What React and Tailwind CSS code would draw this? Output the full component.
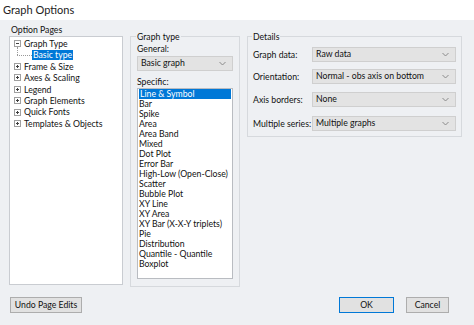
import React from "react";

const font = { fontFamily: 'Lato, "Noto Sans", sans-serif' };

function Chevron() {
  return (
    <svg width="7" height="5" viewBox="0 0 7 5" className="shrink-0">
      <path d="M0.5 1 L3.5 4 L6.5 1" fill="none" stroke="#8a8a8a" strokeWidth="1" />
    </svg>
  );
}

function Select({ value, className = "" }) {
  return (
    <div className={`flex items-center justify-between h-[15px] bg-[#e3e3e3] border border-[#cfcfcf] pl-[3px] pr-[6px] ${className}`}>
      <span className="text-[#111] leading-none whitespace-nowrap">{value}</span>
      <Chevron />
    </div>
  );
}

function Expander({ minus }) {
  return (
    <span className="relative w-[7px] h-[7px] border border-[#a0a0a0] bg-white shrink-0 flex items-center justify-center">
      <span className="absolute w-[3px] h-px bg-[#404040]" />
      {!minus && <span className="absolute w-px h-[3px] bg-[#404040]" />}
    </span>
  );
}

const treeItems = ["Frame & Size", "Axes & Scaling", "Legend", "Graph Elements", "Quick Fonts", "Templates & Objects"];

const listItems = [
  "Line & Symbol", "Bar", "Spike", "Area", "Area Band", "Mixed", "Dot Plot", "Error Bar",
  "High-Low (Open-Close)", "Scatter", "Bubble Plot", "XY Line", "XY Area", "XY Bar (X-X-Y triplets)",
  "Pie", "Distribution", "Quantile - Quantile", "Boxplot",
];

const details = [
  ["Graph data:", "Raw data", "mt-[5px]"],
  ["Orientation:", "Normal - obs axis on bottom", "mt-[7px]"],
  ["Axis borders:", "None", "mt-[8px]"],
  ["Multiple series:", "Multiple graphs", "mt-[9px]"],
];

export default function App() {
  return (
    <div style={font} className="w-[474px] h-[325px] flex flex-col bg-white text-[8.7px] text-[#111] overflow-hidden">
      <div className="h-[20px] flex items-center pl-[3px] text-[11px] text-[#222] bg-white">Graph Options</div>
      <div className="flex-1 bg-[#eef0f3] flex flex-col">
        <div className="flex pl-[9px] pt-[3px]">
          {/* Left column */}
          <div className="w-[114px] flex flex-col">
            <div className="h-[13px] pl-[2px] leading-[13px]">Option Pages</div>
            <div className="h-[249px] bg-white border border-[#c9ccd1] pt-[1px] pl-[4px] flex flex-col leading-[11.4px]">
              <div className="flex items-center gap-[3px] h-[11.4px]">
                <Expander minus />
                <span>Graph Type</span>
              </div>
              <div className="flex items-center h-[11.4px] relative">
                <span className="absolute left-[3px] top-[-2px] h-[8px] border-l border-dotted border-[#999]" />
                <span className="ml-[3px] mt-[-3px] w-[15px] h-[4px] border-b border-dotted border-[#999]" />
                <span className="bg-[#0078d7] text-white px-[1px] h-[10px] leading-[10px] whitespace-nowrap">Basic type</span>
              </div>
              {treeItems.map((t) => (
                <div key={t} className="flex items-center gap-[3px] h-[11.4px] whitespace-nowrap">
                  <Expander />
                  <span>{t}</span>
                </div>
              ))}
            </div>
          </div>
          {/* Middle group */}
          <fieldset className="ml-[7px] w-[110px] h-[256px] mt-[8px] border border-[#d6d9dd] px-[6px] pb-[6px]">
            <legend className="px-[1px] leading-[11px] -ml-[1px]">Graph type</legend>
            <div className="leading-[11px] mt-[1px]">General:</div>
            <Select value="Basic graph" className="mt-[2px] w-[96px]" />
            <div className="leading-[11px] mt-[5px]">Specific:</div>
            <div className="mt-[1px] w-[96px] h-[191px] bg-white border border-[#b9bcc1] flex flex-col">
              {listItems.map((t, i) => (
                <div key={t} className={`h-[10px] leading-[10px] pl-[1px] whitespace-nowrap ${i === 0 ? "bg-[#0078d7] text-white mx-px" : ""}`}>
                  {t}
                </div>
              ))}
            </div>
          </fieldset>
          {/* Details group */}
          <fieldset className="ml-[7px] w-[214px] h-[106px] mt-[8px] border border-[#d6d9dd] pl-[5px] pr-[5px]">
            <legend className="px-[1px] leading-[11px] -ml-[1px]">Details</legend>
            {details.map(([l, v, m]) => (
              <div key={l} className={`flex items-center ${m}`}>
                <span className="w-[59px] shrink-0 whitespace-nowrap">{l}</span>
                <Select value={v} className="w-[144px]" />
              </div>
            ))}
          </fieldset>
        </div>
        <div className="flex items-center mt-auto mb-[12px]">
          <button className="ml-[10px] w-[72px] h-[16px] bg-[#e1e1e1] border border-[#adadad] text-[8.7px] leading-none whitespace-nowrap">Undo Page Edits</button>
          <button className="ml-auto w-[55px] h-[16px] bg-[#e1e1e1] border border-[#0078d7] text-[8.7px] leading-none">OK</button>
          <button className="ml-[12px] mr-[25px] w-[43px] h-[16px] bg-[#e1e1e1] border border-[#adadad] text-[8.7px] leading-none">Cancel</button>
        </div>
      </div>
    </div>
  );
}
